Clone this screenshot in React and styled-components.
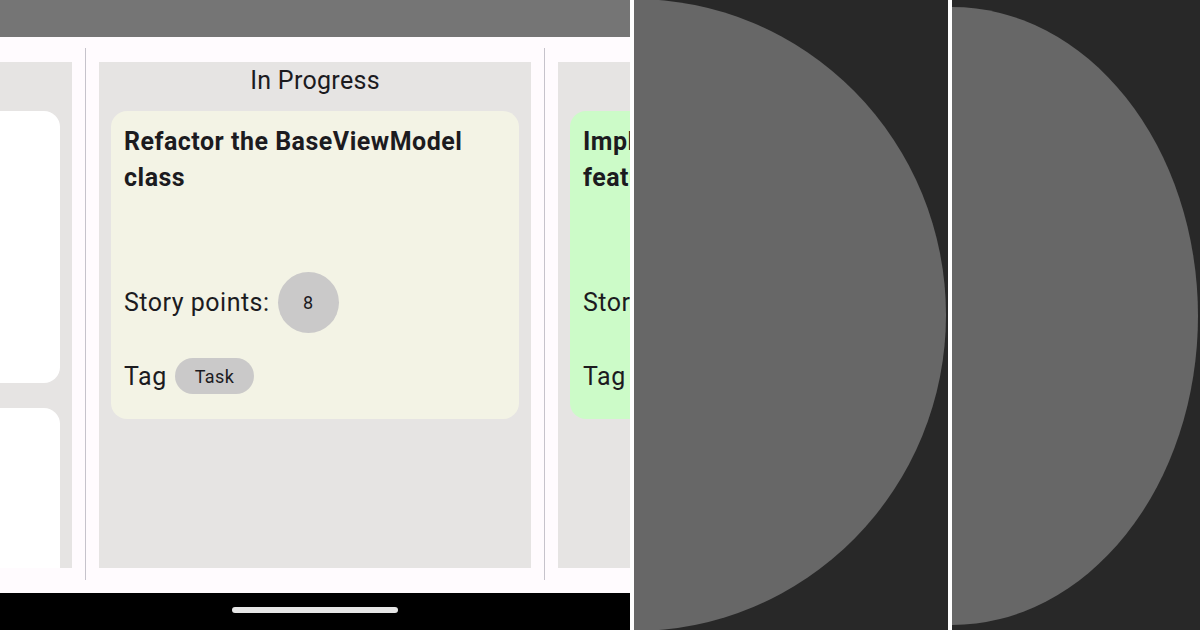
import React from "react";
import styled, { createGlobalStyle } from "styled-components";

const columns = [
  {
    title: "To Do",
    cards: [
      { title: "Add unit tests", points: 3, tag: "Task", bg: "#ffffff" },
      { title: "Set up the CI pipeline", points: 5, tag: "Task", bg: "#ffffff" },
    ],
  },
  {
    title: "In Progress",
    cards: [
      { title: "Refactor the BaseViewModel class", points: 8, tag: "Task", bg: "#f3f3e5" },
    ],
  },
  {
    title: "Done",
    cards: [
      { title: "Implement the offline caching feature", points: 5, tag: "Feature", bg: "#ccfbc8" },
    ],
  },
];

const App = () => {
  return (
    <>
      <GlobalStyle />
      <Screen>
        <Phone>
          <StatusBar />
          <Board>
            <Track>
              {columns.map((col, i) => (
                <React.Fragment key={col.title}>
                  {i > 0 && <Divider />}
                  <Column>
                    <ColumnTitle>{col.title}</ColumnTitle>
                    {col.cards.map((card) => (
                      <Card key={card.title} $bg={card.bg}>
                        <CardTitle>{card.title}</CardTitle>
                        <InfoRow>
                          <InfoLabel>Story points:</InfoLabel>
                          <Points>{card.points}</Points>
                        </InfoRow>
                        <InfoRow $gap>
                          <InfoLabel>Tag</InfoLabel>
                          <Chip>{card.tag}</Chip>
                        </InfoRow>
                      </Card>
                    ))}
                  </Column>
                </React.Fragment>
              ))}
            </Track>
          </Board>
          <NavBar>
            <Handle />
          </NavBar>
        </Phone>

        <DarkPanel $width={314}>
          <svg width="314" height="630" viewBox="0 0 314 630">
            <ellipse cx="0" cy="315" rx="312" ry="316" fill="#676767" />
          </svg>
        </DarkPanel>

        <DarkPanel $width={248}>
          <svg width="248" height="630" viewBox="0 0 248 630">
            <ellipse cx="0" cy="316" rx="246" ry="309" fill="#676767" />
          </svg>
        </DarkPanel>
      </Screen>
    </>
  );
};

export default App;

// Styled Components
const GlobalStyle = createGlobalStyle`
  * { box-sizing: border-box; }
  html, body {
    margin: 0;
    padding: 0;
    background: #ffffff;
    overflow: hidden;
  }
  body {
    font-family: Roboto, "Noto Sans", sans-serif;
    color: #1c1b1f;
  }
`;

const Screen = styled.div`
  width: 1200px;
  height: 630px;
  display: flex;
  gap: 4px;
  background: #ffffff;
`;

const Phone = styled.div`
  width: 630px;
  height: 630px;
  display: flex;
  flex-direction: column;
  overflow: hidden;
`;

const StatusBar = styled.div`
  height: 37px;
  background: #757575;
`;

const Board = styled.div`
  height: 556px;
  background: #fffbfe;
  overflow: hidden;
  padding: 11px 0 13px;
`;

const Track = styled.div`
  display: flex;
  height: 100%;
  margin-left: -360px;
`;

const Divider = styled.div`
  width: 1px;
  flex-shrink: 0;
  margin: 0 13px;
  background: #c6c3cb;
`;

const Column = styled.div`
  width: 432px;
  flex-shrink: 0;
  margin: 14px 0 12px;
  background: #e6e4e3;
  overflow: hidden;
  display: flex;
  flex-direction: column;
  gap: 25px;
  padding: 0 12px;
`;

const ColumnTitle = styled.div`
  font-size: 25px;
  line-height: 28px;
  padding-top: 5px;
  margin-bottom: -9px;
  text-align: center;
  letter-spacing: 0.3px;
`;

const Card = styled.div`
  flex-shrink: 0;
  background: ${(p) => p.$bg};
  border-radius: 16px;
  padding: 13px 13px 25px;
`;

const CardTitle = styled.div`
  font-size: 25px;
  font-weight: 700;
  line-height: 36px;
  letter-spacing: 0.5px;
  margin-bottom: 76px;
`;

const InfoRow = styled.div`
  display: flex;
  align-items: center;
  gap: 8px;
  margin-top: ${(p) => (p.$gap ? "25px" : "0")};
`;

const InfoLabel = styled.span`
  font-size: 25px;
  letter-spacing: 0.5px;
`;

const Points = styled.div`
  width: 61px;
  height: 61px;
  border-radius: 50%;
  background: #cac9c9;
  display: flex;
  align-items: center;
  justify-content: center;
  font-size: 18px;
`;

const Chip = styled.div`
  height: 36px;
  padding: 0 20px;
  border-radius: 18px;
  background: #cac9c9;
  display: flex;
  align-items: center;
  font-size: 18px;
  letter-spacing: 0.4px;
`;

const NavBar = styled.div`
  height: 37px;
  background: #000000;
  display: flex;
  justify-content: center;
  padding-top: 14px;
`;

const Handle = styled.div`
  width: 166px;
  height: 6px;
  border-radius: 3px;
  background: #e6e6e6;
`;

const DarkPanel = styled.div`
  width: ${(p) => p.$width}px;
  height: 630px;
  flex-shrink: 0;
  background: #282828;

  svg {
    display: block;
  }
`;
